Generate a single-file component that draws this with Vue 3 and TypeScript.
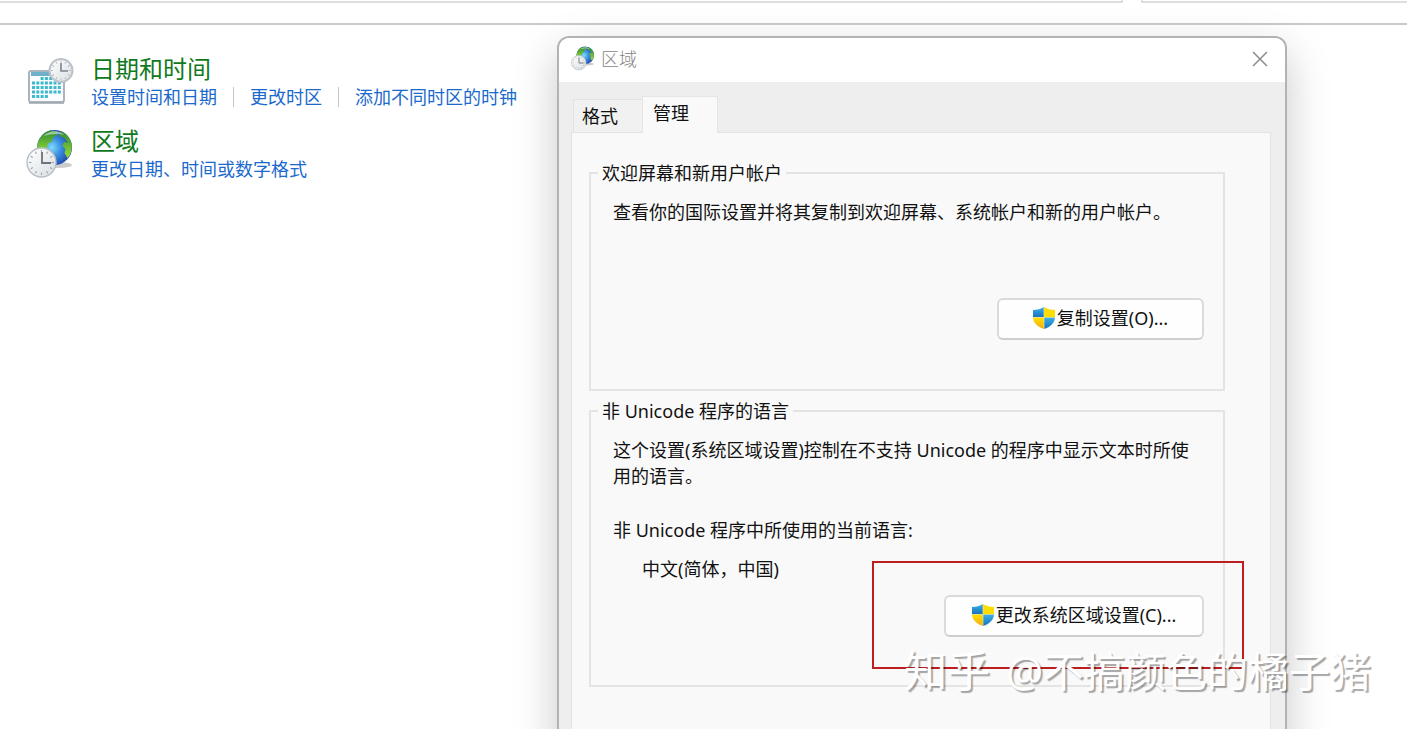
<script setup lang="ts">
import { ref } from 'vue'

interface Category {
  id: string
  title: string
  icon: 'calendar' | 'globe'
  links: string[]
}

const categories: Category[] = [
  { id: 'datetime', title: '日期和时间', icon: 'calendar', links: ['设置时间和日期', '更改时区', '添加不同时区的时钟'] },
  { id: 'region', title: '区域', icon: 'globe', links: ['更改日期、时间或数字格式'] },
]

const tabs = ['格式', '管理']
const activeTab = ref('管理')
const dotRows = [
  [2, 3, 4, 5],
  [0, 1, 2, 3, 4, 5, 6],
  [0, 1, 2, 3, 4, 5, 6],
  [0, 1, 2, 3, 4, 5, 6],
  [0, 1, 2, 3],
]
const ticks = [0, 30, 60, 90, 120, 150, 180, 210, 240, 270, 300, 330]
</script>

<template>
  <div class="desktop">
    <svg class="defs" width="0" height="0" aria-hidden="true">
      <defs>
        <radialGradient id="sea" cx="0.42" cy="0.5" r="0.6">
          <stop offset="0" stop-color="#7fdcfb" />
          <stop offset="0.45" stop-color="#3a8fe0" />
          <stop offset="1" stop-color="#1c3ea6" />
        </radialGradient>
        <linearGradient id="land" x1="0" y1="0" x2="0" y2="1">
          <stop offset="0" stop-color="#2c8a35" />
          <stop offset="1" stop-color="#9bdc35" />
        </linearGradient>
        <linearGradient id="face" x1="0" y1="0" x2="1" y2="1">
          <stop offset="0" stop-color="#ffffff" />
          <stop offset="1" stop-color="#d9dee3" />
        </linearGradient>
        <linearGradient id="blue" x1="0" y1="0" x2="0" y2="1">
          <stop offset="0" stop-color="#3fb2e6" />
          <stop offset="1" stop-color="#1673bd" />
        </linearGradient>
        <linearGradient id="gold" x1="0" y1="0" x2="0" y2="1">
          <stop offset="0" stop-color="#ffe000" />
          <stop offset="1" stop-color="#f5ad13" />
        </linearGradient>
        <symbol id="globe-clock" viewBox="0 0 48 50">
          <ellipse cx="33" cy="36" rx="13" ry="3" fill="#000" opacity="0.2" />
          <circle cx="28.500" cy="18.500" r="17.500" fill="url(#sea)" />
          <path d="M11.500 22C10 13 15 4 24 1.500l8 1-1 4-4 2-1 4-4 2-1 4-3 3-1 3-4-1z" fill="url(#land)" />
          <path d="M34 2c6 2 10 6 11.500 12l-4-1-3-4-5-2zM38 13l7.500 1c1 7-1 12-4 15l-3-5 1-4-3-3z" fill="url(#land)" />
          <path d="M18 7c5-6 15-6 20-1-6-2-14-1-20 1z" fill="#fff" opacity="0.5" />
          <circle cx="15.500" cy="33.500" r="14.500" fill="url(#face)" stroke="#b8bfc6" stroke-width="1.400" />
          <g stroke="#9da3a9" stroke-width="1.100">
            <line v-for="t in ticks" :key="t" x1="15.500" y1="21" x2="15.500" y2="23.500" :transform="`rotate(${t} 15.5 33.5)`" />
          </g>
          <path d="M16 23v11h9" fill="none" stroke="#6d7278" stroke-width="1.800" />
        </symbol>
        <symbol id="calendar-clock" viewBox="0 0 48 50">
          <rect x="3" y="14" width="35" height="31" rx="2" fill="#fafcfd" stroke="#a9b4bd" stroke-width="2" />
          <rect x="5" y="15" width="31" height="4" fill="#6db0cb" />
          <g fill="#3db8cd">
            <template v-for="(row, y) in dotRows" :key="y">
              <rect v-for="x in row" :key="x" :x="6 + x * 4.300" :y="20 + y * 4.500" width="3" height="3" />
            </template>
          </g>
          <path d="M3 46h35" stroke="#9ba5ac" stroke-width="1.500" />
          <circle cx="35" cy="13.500" r="11.500" fill="url(#face)" stroke="#bcc2c9" stroke-width="2" />
          <g stroke="#b4b9be">
            <line v-for="t in ticks" :key="t" x1="35" y1="3.500" x2="35" y2="5.500" :transform="`rotate(${t} 35 13.5)`" />
          </g>
          <path d="M35 6v8h7" fill="none" stroke="#7e848a" stroke-width="1.600" />
        </symbol>
        <symbol id="shield" viewBox="0 0 22 22">
          <path d="M11 0C8 2 4 3 0 3v7h11z" fill="url(#blue)" />
          <path d="M11 0c3 2 7 3 11 3v7H11z" fill="#ffdc00" />
          <path d="M0 10c0 6 5 10 11 12V10z" fill="url(#gold)" />
          <path d="M22 10c0 6-5 10-11 12V10z" fill="url(#blue)" />
          <path d="M11 0v22M0 10.500h22" stroke="#e8e6a8" stroke-width="0.700" />
        </symbol>
      </defs>
    </svg>

    <header class="toolbar">
      <div class="address"></div>
      <div class="search"></div>
    </header>

    <main class="categories">
      <section v-for="c in categories" :key="c.id" class="category">
        <svg class="category-icon" aria-hidden="true"><use :href="c.icon === 'globe' ? '#globe-clock' : '#calendar-clock'" /></svg>
        <div>
          <h2>{{ c.title }}</h2>
          <ul class="links">
            <li v-for="l in c.links" :key="l"><a href="#">{{ l }}</a></li>
          </ul>
        </div>
      </section>
    </main>

    <section class="dialog" role="dialog" aria-labelledby="dialog-title">
      <div class="titlebar">
        <svg class="title-icon" aria-hidden="true"><use href="#globe-clock" /></svg>
        <h1 id="dialog-title">区域</h1>
        <button class="close" type="button" aria-label="关闭">
          <svg width="16" height="16" viewBox="0 0 16 16"><path d="M1 1l14 14M15 1L1 15" stroke="#8c8c8c" stroke-width="1.500" /></svg>
        </button>
      </div>
      <div class="body">
        <div class="tabs" role="tablist">
          <button
            v-for="t in tabs"
            :key="t"
            type="button"
            role="tab"
            class="tab"
            :class="{ active: t === activeTab }"
            :aria-selected="t === activeTab"
            @click="activeTab = t"
          >{{ t }}</button>
        </div>
        <div class="panel" role="tabpanel">
          <fieldset>
            <legend>欢迎屏幕和新用户帐户</legend>
            <div class="group welcome">
              <p>查看你的国际设置并将其复制到欢迎屏幕、系统帐户和新的用户帐户。</p>
              <div class="action">
                <button class="push" type="button"><svg class="shield" aria-hidden="true"><use href="#shield" /></svg>复制设置(O)...</button>
              </div>
            </div>
          </fieldset>
          <fieldset>
            <legend>非 Unicode 程序的语言</legend>
            <div class="group">
              <p>这个设置(系统区域设置)控制在不支持 Unicode 的程序中显示文本时所使用的语言。</p>
              <p class="current">非 Unicode 程序中所使用的当前语言:</p>
              <p class="value">中文(简体，中国)</p>
              <div class="action marked">
                <button class="push wide" type="button"><svg class="shield" aria-hidden="true"><use href="#shield" /></svg>更改系统区域设置(C)...</button>
              </div>
            </div>
          </fieldset>
        </div>
      </div>
    </section>

    <div class="watermark"><span class="site">知乎</span><span>@不搞颜色的橘子猪</span></div>
  </div>
</template>

<style>
body {
  margin: 0;
}
</style>

<style scoped>
.desktop {
  position: relative;
  height: 100vh;
  overflow: hidden;
  background: #fff;
  color: #111;
  font: 18px/26px "Noto Sans", "Noto Sans CJK SC", sans-serif;
}
.defs {
  position: absolute;
}
h1,
h2,
p,
ul {
  margin: 0;
  padding: 0;
  font-weight: 400;
}
button {
  font: inherit;
  color: inherit;
}
.toolbar {
  display: flex;
  align-items: flex-start;
  gap: 18px;
  height: 23px;
  border-bottom: 2px solid #cbcbcb;
}
.address,
.search {
  height: 1px;
  border: 2px solid #dedede;
  border-top: 0;
}
.address {
  flex: 1;
  border-left: 0;
}
.search {
  width: 264px;
  border-right: 0;
}
.categories {
  display: flex;
  flex-direction: column;
  gap: 16px;
  padding: 29px 26px;
}
.category {
  display: flex;
  gap: 17px;
}
.category-icon {
  width: 48px;
  height: 50px;
  margin-top: 3px;
}
h2 {
  color: #0f7a1b;
  font-size: 24px;
  line-height: 30px;
}
.links {
  display: flex;
  list-style: none;
}
.links li {
  display: flex;
  align-items: center;
}
.links li + li::before {
  content: "";
  width: 1px;
  height: 20px;
  margin: 0 16px;
  background: #c4c4c4;
}
.links a {
  color: #1a69cc;
  text-decoration: none;
}
.dialog {
  position: absolute;
  top: 36px;
  left: 557px;
  right: 120px;
  border: 2px solid #b3b3b3;
  border-radius: 12px;
  background: #eee;
  box-shadow: 0 16px 44px rgba(0, 0, 0, 0.22);
}
.titlebar {
  display: flex;
  align-items: center;
  gap: 6px;
  height: 42px;
  padding: 0 17px 2px 12px;
  border-radius: 10px 10px 0 0;
  background: #fff;
}
.title-icon {
  width: 24px;
  height: 25px;
  margin-bottom: 2px;
}
h1 {
  flex: 1;
  color: #858585;
  font-size: 18px;
  font-weight: 300;
}
.close {
  display: flex;
  padding: 0;
  border: 0;
  background: none;
}
.body {
  padding: 14px 14px 16px 12px;
}
.tabs {
  display: flex;
  align-items: flex-end;
  padding-left: 2px;
}
.tab {
  height: 33px;
  padding: 0 24px 0 8px;
  border: 1px solid #e2e2e2;
  border-right: 0;
  border-bottom: 0;
  background: #f1f1f1;
}
.tab.active {
  height: 37px;
  margin-bottom: -1px;
  padding: 0 28px 4px 10px;
  border: 1px solid #e5e5e5;
  border-bottom: 0;
  background: #f9f9f9;
  z-index: 1;
}
.panel {
  padding: 28px 45px 60px 17px;
  border: 1px solid #e3e3e3;
  background: #f9f9f9;
}
fieldset {
  min-width: 0;
  margin: 0;
  padding: 0 7px;
  border: 2px solid #e4e4e4;
}
fieldset + fieldset {
  margin-top: 8px;
}
legend {
  padding: 0 4px;
  line-height: 24px;
}
.group {
  padding: 14px 12px 48px 15px;
}
.current {
  margin-top: 28px;
}
.value {
  margin: 13px 0 13px 29px;
}
.action {
  position: relative;
  width: fit-content;
  margin-left: auto;
}
.welcome {
  padding-bottom: 49px;
}
.welcome .action {
  margin-top: 73px;
}
.push {
  display: flex;
  align-items: center;
  justify-content: center;
  gap: 2px;
  min-width: 207px;
  height: 42px;
  padding: 0 24px 2px;
  border: 2px solid #dadada;
  border-bottom-color: #cecece;
  border-radius: 6px;
  background: #fefefe;
}
.push.wide {
  min-width: 260px;
}
.shield {
  width: 22px;
  height: 22px;
}
.marked::after {
  content: "";
  position: absolute;
  inset: -34px -40px -32px -72px;
  border: 2px solid #bd1e20;
  pointer-events: none;
}
.watermark {
  position: absolute;
  right: 36px;
  bottom: 34px;
  display: flex;
  align-items: center;
  gap: 16px;
  color: #fff;
  font-size: 41px;
  line-height: 48px;
  white-space: nowrap;
  text-shadow: 2px 2px 1px rgba(0, 0, 0, 0.34);
  pointer-events: none;
}
.site {
  font-size: 43px;
}
</style>
